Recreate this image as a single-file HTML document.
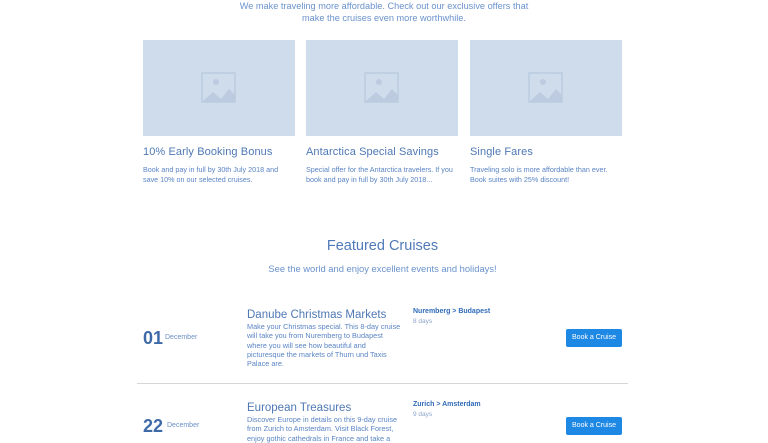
<!DOCTYPE html>
<html><head><style>
*{margin:0;padding:0;box-sizing:border-box}
body{width:768px;height:438px;overflow:hidden;background:#fff;font-family:"Liberation Sans",sans-serif;color:#5a84c4;position:relative}
.a{position:absolute;white-space:nowrap}
.img{position:absolute;top:40px;width:152px;height:96px;background:#cfdcec}
.img svg{position:absolute;left:58px;top:32px}
.t{font-size:11px;color:#4f78b4;letter-spacing:.1px}
.s{font-size:7.2px;line-height:10px;color:#5a84c4}
.btn{position:absolute;left:566px;width:56px;height:18px;background:#1e88e5;border-radius:2px;color:#fff;font-size:7px;text-align:center;line-height:18px}
.d{font-size:18px;font-weight:bold;color:#3f6aa8}
.m{font-size:7px;color:#6b8fc4}
.ct{font-size:11.5px;color:#4f78b4}
.cd{font-size:7.3px;line-height:9.3px;color:#5a84c4}
.r{font-size:7px;font-weight:bold;color:#2f6ab8}
.dy{font-size:6.5px;color:#8aa3c8}
</style></head><body>
<div class="a" style="left:0;width:768px;top:0;text-align:center;font-size:9.2px;line-height:12px;color:#6a92cc;white-space:normal">We make traveling more affordable. Check out our exclusive offers that<br>make the cruises even more worthwhile.</div>

<div class="img" style="left:143px"><svg width="36" height="32" viewBox="0 0 36 32"><rect x="1" y="1" width="33" height="29" fill="none" stroke="#bccbe0" stroke-width="1.5"/><circle cx="15" cy="10" r="3" fill="#bccbe0"/><path d="M1 30 L12 20 L20 27 L28 17 L34 23 L34 30Z" fill="#bccbe0"/></svg></div>
<div class="img" style="left:306px"><svg width="36" height="32" viewBox="0 0 36 32"><rect x="1" y="1" width="33" height="29" fill="none" stroke="#bccbe0" stroke-width="1.5"/><circle cx="15" cy="10" r="3" fill="#bccbe0"/><path d="M1 30 L12 20 L20 27 L28 17 L34 23 L34 30Z" fill="#bccbe0"/></svg></div>
<div class="img" style="left:470px"><svg width="36" height="32" viewBox="0 0 36 32"><rect x="1" y="1" width="33" height="29" fill="none" stroke="#bccbe0" stroke-width="1.5"/><circle cx="15" cy="10" r="3" fill="#bccbe0"/><path d="M1 30 L12 20 L20 27 L28 17 L34 23 L34 30Z" fill="#bccbe0"/></svg></div>

<div class="a t" style="left:143px;top:146px">10% Early Booking Bonus</div>
<div class="a t" style="left:306px;top:146px">Antarctica Special Savings</div>
<div class="a t" style="left:470px;top:146px">Single Fares</div>
<div class="a s" style="left:143px;top:165px">Book and pay in full by 30th July 2018 and<br>save 10% on our selected cruises.</div>
<div class="a s" style="left:306px;top:165px">Special offer for the Antarctica travelers. If you<br>book and pay in full by 30th July 2018...</div>
<div class="a s" style="left:470px;top:165px">Traveling solo is more affordable than ever.<br>Book suites with 25% discount!</div>

<div class="a" style="left:0;width:765px;top:238px;text-align:center;font-size:14.5px;color:#5079b8">Featured Cruises</div>
<div class="a" style="left:0;width:765px;top:263px;text-align:center;font-size:9.4px;color:#6a92cc">See the world and enjoy excellent events and holidays!</div>

<div class="a d" style="left:143px;top:328px">01</div>
<div class="a m" style="left:165px;top:334px">December</div>
<div class="a ct" style="left:247px;top:309px">Danube Christmas Markets</div>
<div class="a cd" style="left:247px;top:322px">Make your Christmas special. This 8-day cruise<br>will take you from Nuremberg to Budapest<br>where you will see how beautiful and<br>picturesque the markets of Thurn und Taxis<br>Palace are.</div>
<div class="a r" style="left:413px;top:308px">Nuremberg &gt; Budapest</div>
<div class="a dy" style="left:413px;top:318px">8 days</div>
<div class="btn" style="top:329px">Book a Cruise</div>

<div class="a" style="left:137px;top:383px;width:491px;height:1px;background:#d6d6d6"></div>

<div class="a d" style="left:143px;top:416px">22</div>
<div class="a m" style="left:167px;top:422px">December</div>
<div class="a ct" style="left:247px;top:402px">European Treasures</div>
<div class="a cd" style="left:247px;top:415px">Discover Europe in details on this 9-day cruise<br>from Zurich to Amsterdam. Visit Black Forest,<br>enjoy gothic cathedrals in France and take a</div>
<div class="a r" style="left:413px;top:401px">Zurich &gt; Amsterdam</div>
<div class="a dy" style="left:413px;top:411px">9 days</div>
<div class="btn" style="top:417px">Book a Cruise</div>
</body></html>
